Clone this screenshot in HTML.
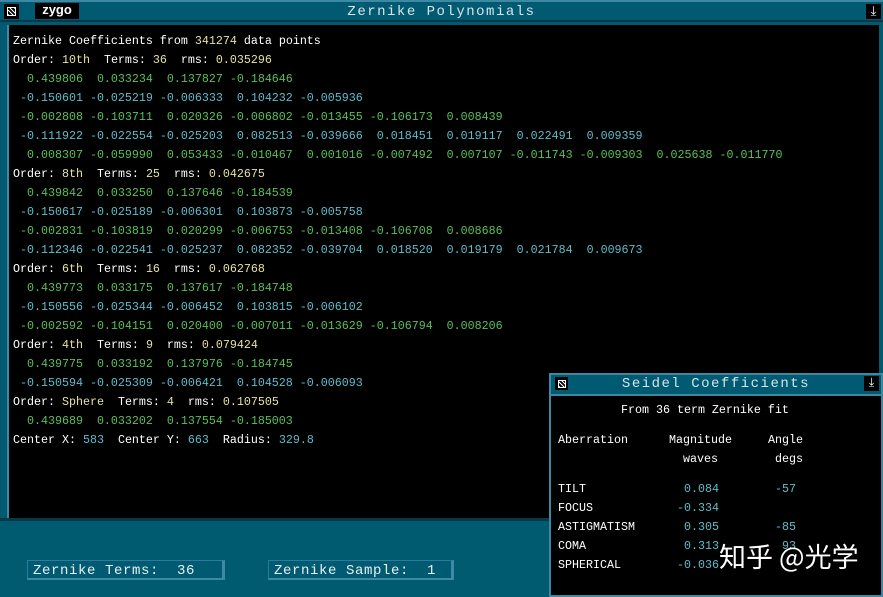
<!DOCTYPE html>
<html><head><meta charset="utf-8"><style>
body{margin:0;width:883px;height:597px;background:#005a70;position:relative;overflow:hidden;font-family:"Liberation Mono",monospace}
.tb{position:absolute;left:0;top:0;width:883px;height:22px;background:#005a72;border-top:2px solid #3d88a3;box-sizing:border-box;border-bottom:2px solid #0a3848}
.ttl{position:absolute;top:2px;left:0;width:883px;text-align:center;color:#d8e4ea;font-size:14px;letter-spacing:1.5px}
.main{position:absolute;left:7px;top:25px;width:870px;height:493px;background:#000;border-left:2px solid #3d88a3}
pre{margin:0;position:absolute;font-family:"Liberation Mono",monospace;font-size:11.67px;line-height:19px;color:#fff}
.s{position:absolute;font-size:11.67px;line-height:14px;color:#fff;white-space:pre}
.g{color:#5cbf5c}.c{color:#62bccb}.y{color:#e6e2a0}
.s.c{color:#62bccb}
.fld{position:absolute;top:560px;height:20px;border:1px solid #2a7c98;border-right:3px solid #3d8aa6;border-bottom:2px solid #3d8aa6;background:#005a72;color:#e8f0f2;font-size:14px;line-height:20px;padding-left:5px;box-sizing:border-box;letter-spacing:0.6px;white-space:pre}
.sw{position:absolute;left:549px;top:373px;width:334px;height:224px;background:#000;border:2px solid #3d88a3;box-sizing:border-box}
.stb{position:absolute;left:0;top:0;width:100%;height:21px;background:#005a72;border-bottom:2px solid #3d88a3;box-sizing:border-box}
.icon{position:absolute;background:#000;width:15px;height:15px}
</style></head><body>
<div class="tb">
<div class="icon" style="left:4px;top:2px"><div style="position:absolute;left:3px;top:3px;width:7px;height:7px;border:1px solid #fff;background:repeating-linear-gradient(45deg,#fff 0 1px,#000 1px 3px)"></div></div>
<div style="position:absolute;left:35px;top:1px;width:44px;height:16px;background:#000;color:#fff;font:bold 13px 'Liberation Sans',sans-serif;line-height:14px;text-align:center">zygo</div>
<div class="ttl">Zernike Polynomials</div>
<div class="icon" style="left:866px;top:2px;color:#fff;font-size:13px;line-height:15px;text-align:center">⤓</div>
</div>
<div class="main">
<pre style="left:4px;top:7px">Zernike Coefficients from <span class="y">341274</span> data points
Order: <span class="y">10th</span>  Terms: <span class="y">36</span>  rms: <span class="y">0.035296</span>
<span class="g">  0.439806  0.033234  0.137827 -0.184646</span>
<span class="c"> -0.150601 -0.025219 -0.006333  0.104232 -0.005936</span>
<span class="g"> -0.002808 -0.103711  0.020326 -0.006802 -0.013455 -0.106173  0.008439</span>
<span class="c"> -0.111922 -0.022554 -0.025203  0.082513 -0.039666  0.018451  0.019117  0.022491  0.009359</span>
<span class="g">  0.008307 -0.059990  0.053433 -0.010467  0.001016 -0.007492  0.007107 -0.011743 -0.009303  0.025638 -0.011770</span>
Order: <span class="y">8th</span>  Terms: <span class="y">25</span>  rms: <span class="y">0.042675</span>
<span class="g">  0.439842  0.033250  0.137646 -0.184539</span>
<span class="c"> -0.150617 -0.025189 -0.006301  0.103873 -0.005758</span>
<span class="g"> -0.002831 -0.103819  0.020299 -0.006753 -0.013408 -0.106708  0.008686</span>
<span class="c"> -0.112346 -0.022541 -0.025237  0.082352 -0.039704  0.018520  0.019179  0.021784  0.009673</span>
Order: <span class="y">6th</span>  Terms: <span class="y">16</span>  rms: <span class="y">0.062768</span>
<span class="g">  0.439773  0.033175  0.137617 -0.184748</span>
<span class="c"> -0.150556 -0.025344 -0.006452  0.103815 -0.006102</span>
<span class="g"> -0.002592 -0.104151  0.020400 -0.007011 -0.013629 -0.106794  0.008206</span>
Order: <span class="y">4th</span>  Terms: <span class="y">9</span>  rms: <span class="y">0.079424</span>
<span class="g">  0.439775  0.033192  0.137976 -0.184745</span>
<span class="c"> -0.150594 -0.025309 -0.006421  0.104528 -0.006093</span>
Order: <span class="y">Sphere</span>  Terms: <span class="y">4</span>  rms: <span class="y">0.107505</span>
<span class="g">  0.439689  0.033202  0.137554 -0.185003</span>
Center X: <span class="c">583</span>  Center Y: <span class="c">663</span>  Radius: <span class="c">329.8</span></pre>
</div>
<div style="position:absolute;left:0;top:518px;width:549px;height:3px;background:#0a3848"></div>
<div class="fld" style="left:27px;width:198px">Zernike Terms:  36</div>
<div class="fld" style="left:268px;width:186px">Zernike Sample:  1</div>
<div class="sw">
<div class="stb">
<div class="icon" style="left:4px;top:2px;width:13px;height:13px"><div style="position:absolute;left:3px;top:3px;width:6px;height:6px;border:1px solid #fff;background:repeating-linear-gradient(45deg,#fff 0 1px,#000 1px 3px)"></div></div>
<div style="position:absolute;left:0;width:100%;top:1px;text-align:center;color:#d8e4ea;font-size:14px;letter-spacing:1.5px">Seidel Coefficients</div>
<div class="icon" style="right:2px;top:1px;color:#fff;font-size:12px;line-height:15px;text-align:center">⤓</div>
</div>
</div>
<div class="s" style="left:621px;top:403px">From 36 term Zernike fit</div>
<div class="s" style="left:558px;top:433px">Aberration</div>
<div class="s" style="left:669px;top:433px">Magnitude</div>
<div class="s" style="left:768px;top:433px">Angle</div>
<div class="s" style="left:683px;top:452px">waves</div>
<div class="s" style="left:775px;top:452px">degs</div>
<div class="s" style="left:558px;top:482px">TILT</div>
<div class="s" style="left:558px;top:501px">FOCUS</div>
<div class="s" style="left:558px;top:520px">ASTIGMATISM</div>
<div class="s" style="left:558px;top:539px">COMA</div>
<div class="s" style="left:558px;top:558px">SPHERICAL</div>
<div class="s c" style="left:684px;top:482px">0.084</div>
<div class="s c" style="left:677px;top:501px">-0.334</div>
<div class="s c" style="left:684px;top:520px">0.305</div>
<div class="s c" style="left:684px;top:539px">0.313</div>
<div class="s c" style="left:677px;top:558px">-0.036</div>
<div class="s c" style="left:775px;top:482px">-57</div>
<div class="s c" style="left:775px;top:520px">-85</div>
<div class="s c" style="left:782px;top:539px">93</div>
<div style="position:absolute;left:719px;top:539px;color:#fff;font-family:'Noto Sans CJK SC',sans-serif;font-size:27px;line-height:34px;white-space:pre">知乎 @光学</div>
</body></html>
